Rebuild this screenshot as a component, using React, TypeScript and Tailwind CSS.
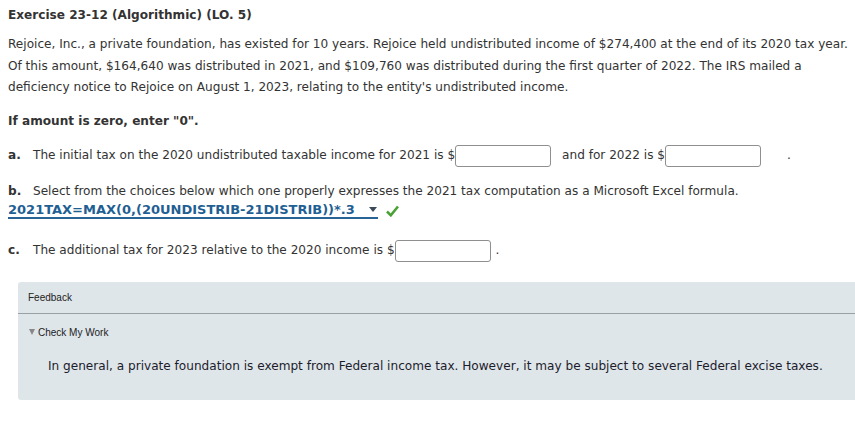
export default function App() {
  const input = 'inline-block h-[22px] w-[96px] rounded-[3px] border border-[#8f8f8f] bg-white align-middle';

  return (
    <div className="min-h-[428px] bg-white pt-[7px] font-['Verdana','DejaVu_Sans',sans-serif] text-[12.1px] text-[#333]">
      <div className="px-[8px]">
        <h1 className="text-[12.1px] font-bold leading-[16px]">Exercise 23-12 (Algorithmic) (LO. 5)</h1>

        <p className="mt-[11px] whitespace-nowrap leading-[21.5px]">
          Rejoice, Inc., a private foundation, has existed for 10 years. Rejoice held undistributed income of $274,400 at the end of its 2020 tax year.
          <br />
          Of this amount, $164,640 was distributed in 2021, and $109,760 was distributed during the first quarter of 2022. The IRS mailed a
          <br />
          deficiency notice to Rejoice on August 1, 2023, relating to the entity's undistributed income.
        </p>

        <p className="mt-[14px] font-bold leading-[16px]">If amount is zero, enter "0".</p>

        {/* a */}
        <div className="mt-[16px] flex h-[22px] items-center whitespace-nowrap">
          <span className="w-[25px] font-bold">a.</span>
          <span>The initial tax on the 2020 undistributed taxable income for 2021 is $</span>
          <span className={input}></span>
          <span className="ml-[11px]">and for 2022 is $</span>
          <span className={input}></span>
          <span className="ml-[26px]">.</span>
        </div>

        {/* b */}
        <div className="mt-[17px] flex h-[16px] items-center whitespace-nowrap">
          <span className="w-[25px] font-bold">b.</span>
          <span>Select from the choices below which one properly expresses the 2021 tax computation as a Microsoft Excel formula.</span>
        </div>
        <div className="mt-[3px] flex h-[16px] items-center">
          <div className="flex h-[16px] w-[370px] items-center justify-between border-b-2 border-[#2a6496]">
            <span className="text-[13px] font-bold leading-[14px] text-[#1f5f93]">2021TAX=MAX(0,(20UNDISTRIB-21DISTRIB))*.3</span>
            <svg width="8" height="5" viewBox="0 0 8 5" className="mr-[1px]">
              <path d="M0 0 H8 L4 5 Z" fill="#3a4a5a" />
            </svg>
          </div>
          <svg width="13" height="12" viewBox="0 0 13 12" className="ml-[8px]">
            <path d="M1 6.5 L4.8 10.3 L12 1.5" fill="none" stroke="#4aa234" strokeWidth="2.6" />
          </svg>
        </div>

        {/* c */}
        <div className="mt-[21px] flex h-[22px] items-center whitespace-nowrap">
          <span className="w-[25px] font-bold">c.</span>
          <span>The additional tax for 2023 relative to the 2020 income is $</span>
          <span className={input}></span>
          <span className="ml-[5px]">.</span>
        </div>
      </div>

      {/* Feedback */}
      <div className="ml-[18px] mt-[20px] h-[118px] rounded-l-[3px] bg-[#dfe6ea] font-['Arial','Liberation_Sans',sans-serif] text-[10px] text-[#222]">
        <div className="flex h-[31px] items-center pl-[10px] pt-[1px]">Feedback</div>
        <div className="h-px bg-[#9aa1a6]"></div>
        <div className="mt-[12px] flex h-[13px] items-center pl-[11px]">
          <svg width="6" height="6" viewBox="0 0 6 6" className="mr-[3px]">
            <path d="M0 0 H6 L3 6 Z" fill="#888" />
          </svg>
          <span>Check My Work</span>
        </div>
        <p className="mt-[19px] whitespace-nowrap pl-[30px] font-['Verdana','DejaVu_Sans',sans-serif] text-[12.1px] leading-[16px] text-[#1c1c2c]">
          In general, a private foundation is exempt from Federal income tax. However, it may be subject to several Federal excise taxes.
        </p>
      </div>
    </div>
  );
}
